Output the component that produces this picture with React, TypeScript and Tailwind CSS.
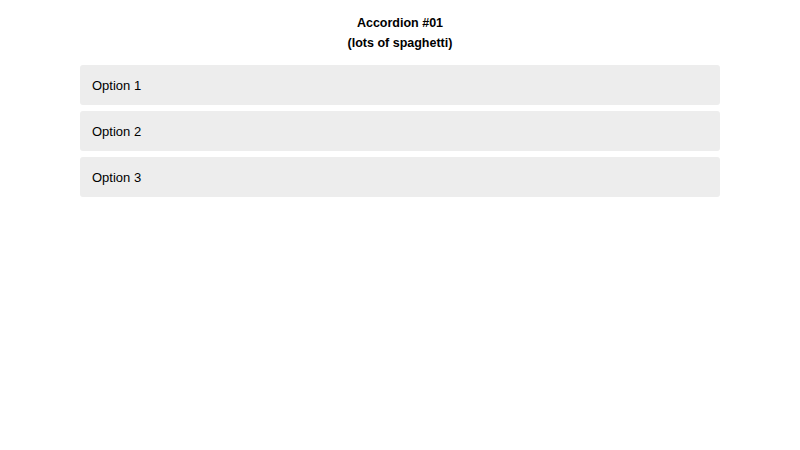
export default function App() {
  const items = ["Option 1", "Option 2", "Option 3"];
  return (
    <div className="w-full min-h-[450px] bg-white" style={{ fontFamily: '"Liberation Sans", Arial, sans-serif' }}>
      <div className="w-[640px] mx-auto pt-[13px]">
        <div className="text-center font-bold text-[12.5px] leading-5 text-black">
          <div>Accordion #01</div>
          <div>(lots of spaghetti)</div>
        </div>
        <div className="mt-3 flex flex-col gap-[6px]">
          {items.map((t) => (
            <div key={t} className="h-10 px-3 pt-px flex items-center bg-[#ededed] rounded-[3px] text-[13px] text-black">
              {t}
            </div>
          ))}
        </div>
      </div>
    </div>
  );
}
